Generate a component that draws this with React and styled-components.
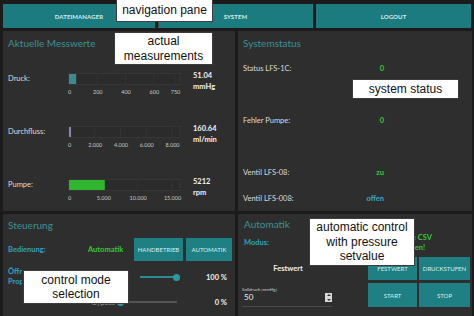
import React from "react";
import styled, { createGlobalStyle } from "styled-components";

const COLORS = {
  frame: "#1b1b1b",
  panel: "#2f2e2e",
  teal: "#1b7b7e",
  title: "#3a9296",
  label: "#dcdcdc",
  bold: "#2ea2c0",
  green: "#36c936",
};

const GlobalStyle = createGlobalStyle`
  html, body { margin: 0; padding: 0; background: ${COLORS.frame}; }
  body { font-family: Lato, "Open Sans", sans-serif; }
`;

const Screen = styled.div`
  position: relative;
  width: 474px;
  height: 316px;
  box-sizing: border-box;
  overflow: hidden;
  background: ${COLORS.frame};
  padding: 4px 2px 0 3px;
  display: grid;
  grid-template-columns: 232px 1fr;
  grid-template-rows: 24px 180px 1fr;
  column-gap: 3px;
  row-gap: 3px;
`;

const NavBar = styled.nav`
  grid-column: 1 / -1;
  display: grid;
  grid-template-columns: 152px 155px 1fr;
  gap: 3px;
  margin-right: 1px;
`;

const NavButton = styled.div`
  background: ${COLORS.teal};
  color: #d6eeee;
  font-size: 6px;
  font-weight: 700;
  display: flex;
  align-items: center;
  justify-content: center;
  letter-spacing: 0.1px;
`;

const Panel = styled.section`
  background: ${COLORS.panel};
  box-sizing: border-box;
  padding: ${(p) => p.$pad || "5px 5px 0 5px"};
  color: ${COLORS.label};
  font-size: 7.5px;
  overflow: hidden;
`;

const Title = styled.h2`
  margin: 0;
  font-size: 10px;
  line-height: 14px;
  font-weight: 400;
  color: ${COLORS.title};
`;

const MeasureList = styled.div`
  margin-top: 23px;
  display: flex;
  flex-direction: column;
  gap: 23px;
`;

const MeasureRow = styled.div`
  display: grid;
  grid-template-columns: 58px 127px 1fr;
  align-items: start;
  height: 30px;
`;

const RowLabel = styled.div`
  line-height: 11px;
  color: ${COLORS.label};
`;

const Value = styled.div`
  margin-top: -3px;
  font-weight: 700;
  color: #f2f2f2;
  font-size: 7.5px;
  line-height: 11px;
`;

const StatusGrid = styled.div`
  margin-top: 13px;
  display: flex;
  flex-direction: column;
`;

const StatusRow = styled.div`
  display: grid;
  grid-template-columns: 100px 41px;
  line-height: 12px;
  margin-top: ${(p) => p.$gap || 0}px;
`;

const StatusValue = styled.span`
  text-align: right;
  font-weight: 700;
  color: ${(p) => p.$color || COLORS.green};
`;

const ModeRow = styled.div`
  margin-top: 6px;
  display: grid;
  grid-template-columns: 80px 46px 49px 49px;
  align-items: center;
  height: 23px;
  & > :last-child { margin-left: 3px; }
`;

const BoldTeal = styled.span`
  font-weight: 700;
  color: ${COLORS.bold};
  line-height: 10px;
  white-space: nowrap;
`;

const GreenText = styled.span`
  font-weight: 700;
  color: ${COLORS.green};
  line-height: 10px;
`;

const ActionButton = styled.div`
  background: #1f8084;
  color: #d9efef;
  font-size: 6px;
  height: ${(p) => p.$h || 23}px;
  display: flex;
  align-items: center;
  justify-content: center;
  white-space: nowrap;
`;

const SliderRow = styled.div`
  display: flex;
  align-items: center;
  height: ${(p) => p.$h}px;
  margin-top: ${(p) => p.$top}px;
  padding-right: 8px;
`;

const SliderLabel = styled.div`
  flex: 1;
  display: flex;
  align-items: center;
  justify-content: ${(p) => (p.$right ? "flex-end" : "flex-start")};
  padding-right: ${(p) => (p.$right ? 5 : 0)}px;
  color: #9a9a9a;
`;

/* the label is cut where the annotation box starts */
const Clip = styled.div`
  width: ${(p) => p.$w}px;
  overflow: hidden;
  display: flex;
  flex-direction: column;
`;

const Track = styled.div`
  position: relative;
  width: ${(p) => p.$w}px;
  height: 2px;
  background: ${(p) => (p.$on ? "#2a8c92" : "#555")};
`;

const Thumb = styled.span`
  position: absolute;
  top: -2.5px;
  width: 7px;
  height: 7px;
  border-radius: 50%;
  background: #2a9aa0;
`;

const Percent = styled.div`
  width: 50px;
  text-align: right;
  font-weight: 700;
  color: #eee;
`;

const ModusRow = styled.div`
  margin-top: 2px;
  display: grid;
  grid-template-columns: 153px 1fr;
  align-items: center;
  height: 20px;
`;

const AutoGrid = styled.div`
  margin-top: 4px;
  display: grid;
  grid-template-columns: 88px 102px;
  justify-content: space-between;
  grid-template-rows: 23px 24px;
  row-gap: 3px;
`;

const ButtonPair = styled.div`
  display: grid;
  grid-template-columns: 49px 51px;
  column-gap: 2px;
`;

const Festwert = styled.div`
  display: flex;
  align-items: center;
  justify-content: center;
  font-weight: 700;
  color: #f0f0f0;
`;

const InputBox = styled.div`
  display: flex;
  align-items: flex-end;
  justify-content: space-between;
  border-bottom: 1px solid #4a4a4a;
  padding: 0 0 4px 2px;
  margin-left: -2px;
`;

const InputText = styled.div`
  display: flex;
  flex-direction: column;
  & small { font-size: 4.5px; color: #ccc; line-height: 6px; margin-left: -2px; }
  & span { font-size: 8px; color: #eee; line-height: 9px; }
`;

const Spinner = styled.div`
  width: 7px;
  height: 9px;
  background: #d8d8d8;
  display: flex;
  flex-direction: column;
  justify-content: space-around;
  align-items: center;
  & i { width: 0; height: 0; border-left: 2px solid transparent; border-right: 2px solid transparent; }
  & i:first-child { border-bottom: 2px solid #333; }
  & i:last-child { border-top: 2px solid #333; }
`;

const Note = styled.div`
  position: absolute;
  left: ${(p) => p.$x}px;
  top: ${(p) => p.$y}px;
  width: ${(p) => p.$w}px;
  height: ${(p) => p.$h}px;
  box-sizing: border-box;
  background: #fff;
  border: 1px solid #3c3c3c;
  color: #111;
  font-family: "Liberation Sans", Arial, sans-serif;
  font-size: 12px;
  line-height: 14.5px;
  text-align: center;
  display: flex;
  align-items: center;
  justify-content: center;
`;

const Pointer = styled.span`
  position: absolute;
  left: 158px;
  top: 22px;
  width: 1px;
  height: 5px;
  background: #444;
`;

function BarChart({ ticks, max, end, value, color }) {
  const x = (v) => 3 + (v / max) * end;
  return (
    <svg width="127" height="30" viewBox="0 0 127 30">
      <rect x="3" y="0.5" width="111" height="11" fill="#2b2b2b" stroke="#3a3a3a" strokeWidth="0.8" />
      {ticks.map((t) => (
        <line key={t.l} x1={x(t.v)} x2={x(t.v)} y1="0.5" y2="11.5" stroke="#3a3a3a" strokeWidth="0.6" />
      ))}
      <rect x="3" y="1" width={Math.max(2, x(value) - 3)} height="10" fill={color} />
      {ticks.map((t) => (
        <text key={t.l + "t"} x={x(t.v) + 0.5} y="21" fontSize="5.5" fill="#c8c8c8" textAnchor="middle" fontFamily="Lato, sans-serif">
          {t.l}
        </text>
      ))}
    </svg>
  );
}

const measures = [
  {
    label: "Druck:", value: 51.04, unit: "mmHg", text: "51.04", color: "#3b8b8c", max: 750, end: 106,
    ticks: [{ l: "0", v: 0 }, { l: "200", v: 200 }, { l: "400", v: 400 }, { l: "600", v: 600 }, { l: "750", v: 750 }],
  },
  {
    label: "Durchfluss:", value: 160.64, unit: "ml/min", text: "160.64", color: "#8d80b2", max: 8000, end: 103,
    ticks: [{ l: "0", v: 0 }, { l: "2.000", v: 2000 }, { l: "4.000", v: 4000 }, { l: "6.000", v: 6000 }, { l: "8.000", v: 8000 }],
  },
  {
    label: "Pumpe:", value: 5212, unit: "rpm", text: "5212", color: "#30b530", max: 15000, end: 103,
    ticks: [{ l: "0", v: 0 }, { l: "5.000", v: 5000 }, { l: "10.000", v: 10000 }, { l: "15.000", v: 15000 }],
  },
];

export default function App() {
  return (
    <>
      <GlobalStyle />
      <Screen>
        <NavBar>
          <NavButton>DATEIMANAGER</NavButton>
          <NavButton>SYSTEM</NavButton>
          <NavButton>LOGOUT</NavButton>
        </NavBar>

        <Panel>
          <Title>Aktuelle Messwerte</Title>
          <MeasureList>
            {measures.map((m) => (
              <MeasureRow key={m.label}>
                <RowLabel>{m.label}</RowLabel>
                <BarChart ticks={m.ticks} max={m.max} end={m.end} value={m.value} color={m.color} />
                <Value>
                  {m.text}
                  <br />
                  {m.unit}
                </Value>
              </MeasureRow>
            ))}
          </MeasureList>
        </Panel>

        <Panel>
          <Title>Systemstatus</Title>
          <StatusGrid>
            <StatusRow>
              <span>Status LFS-1C:</span>
              <StatusValue>0</StatusValue>
            </StatusRow>
            <StatusRow $gap={40}>
              <span>Fehler Pumpe:</span>
              <StatusValue>0</StatusValue>
            </StatusRow>
            <StatusRow $gap={40}>
              <span>Ventil LFS-08:</span>
              <StatusValue>zu</StatusValue>
            </StatusRow>
            <StatusRow $gap={14}>
              <span>Ventil LFS-008:</span>
              <StatusValue $color="#3aa7c4">offen</StatusValue>
            </StatusRow>
          </StatusGrid>
        </Panel>

        <Panel $pad="4px 0 0 5px">
          <Title>Steuerung</Title>
          <ModeRow>
            <BoldTeal>Bedienung:</BoldTeal>
            <GreenText>Automatik</GreenText>
            <ActionButton>HANDBETRIEB</ActionButton>
            <ActionButton>AUTOMATIK</ActionButton>
          </ModeRow>
          <SliderRow $h={20} $top={6}>
            <SliderLabel>
              <Clip $w={14}>
                <BoldTeal>Öffnung</BoldTeal>
                <BoldTeal>Proportionalventil:</BoldTeal>
              </Clip>
            </SliderLabel>
            <Track $w={37} $on>
              <Thumb style={{ right: -3 }} />
            </Track>
            <Percent>100 %</Percent>
          </SliderRow>
          <SliderRow $h={12} $top={9}>
            <SliderLabel $right>
              <span>Bypass</span>
            </SliderLabel>
            <Track $w={57}>
              <Thumb style={{ left: -3 }} />
            </Track>
            <Percent>0 %</Percent>
          </SliderRow>
        </Panel>

        <Panel $pad="3px 2px 0 6px">
          <Title>Automatik</Title>
          <ModusRow>
            <BoldTeal>Modus:</BoldTeal>
            <GreenText>
              Keine CSV
              <br />
              geladen!
            </GreenText>
          </ModusRow>
          <AutoGrid>
            <Festwert>Festwert</Festwert>
            <ButtonPair>
              <ActionButton>FESTWERT</ActionButton>
              <ActionButton>DRUCKSTUFEN</ActionButton>
            </ButtonPair>
            <InputBox>
              <InputText>
                <small>Solldruck [mmHg]</small>
                <span>50</span>
              </InputText>
              <Spinner>
                <i />
                <i />
              </Spinner>
            </InputBox>
            <ButtonPair>
              <ActionButton $h={24}>START</ActionButton>
              <ActionButton $h={24}>STOP</ActionButton>
            </ButtonPair>
          </AutoGrid>
        </Panel>

        <Note $x={116} $y={-1} $w={97} $h={23}>navigation pane</Note>
        <Pointer />
        <Note $x={114} $y={32} $w={99} $h={33}>
          actual
          <br />
          measurements
        </Note>
        <Note $x={352} $y={79} $w={107} $h={20}>system status</Note>
        <Note $x={23} $y={270} $w={106} $h={34}>
          control mode
          <br />
          selection
        </Note>
        <Note $x={309} $y={218} $w={106} $h={48}>
          automatic control
          <br />
          with pressure
          <br />
          setvalue
        </Note>
      </Screen>
    </>
  );
}
